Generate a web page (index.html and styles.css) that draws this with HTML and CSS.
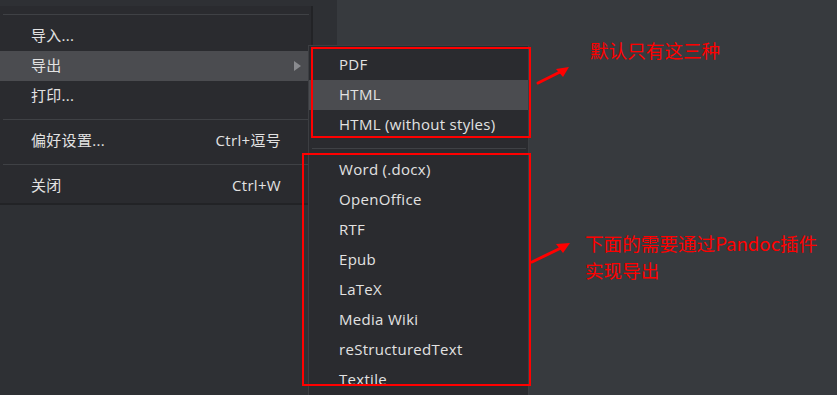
FILE: index.html
```html
<!DOCTYPE html>
<html lang="zh-CN">
<head>
<meta charset="utf-8">
<link rel="stylesheet" href="styles.css">
</head>
<body>
<div class="page">
  <div class="sidebar"></div>

  <div class="menu main-menu">
    <div class="sep"></div>
    <div class="item"><span>导入...</span></div>
    <div class="item active"><span>导出</span><span class="caret"></span></div>
    <div class="item"><span>打印...</span></div>
    <div class="sep"></div>
    <div class="item"><span>偏好设置...</span><span class="key">Ctrl+逗号</span></div>
    <div class="sep"></div>
    <div class="item"><span>关闭</span><span class="key">Ctrl+W</span></div>
  </div>

  <div class="menu sub-menu">
    <div class="item"><span>PDF</span></div>
    <div class="item active"><span>HTML</span></div>
    <div class="item"><span>HTML (without styles)</span></div>
    <div class="sep"></div>
    <div class="item"><span>Word (.docx)</span></div>
    <div class="item"><span>OpenOffice</span></div>
    <div class="item"><span>RTF</span></div>
    <div class="item"><span>Epub</span></div>
    <div class="item"><span>LaTeX</span></div>
    <div class="item"><span>Media Wiki</span></div>
    <div class="item"><span>reStructuredText</span></div>
    <div class="item"><span>Textile</span></div>
  </div>

  <div class="box box-top"></div>
  <div class="box box-bottom"></div>

  <svg class="arrows" width="837" height="395" viewBox="0 0 837 395">
    <line x1="538" y1="83" x2="562" y2="71" stroke="#ff0000" stroke-width="3" stroke-linecap="round"/>
    <polygon points="569,67 556,69 563,77" fill="#ff0000"/>
    <line x1="532" y1="262" x2="563" y2="247" stroke="#ff0000" stroke-width="3" stroke-linecap="round"/>
    <polygon points="570,243 556,244 563,253" fill="#ff0000"/>
  </svg>

  <div class="note note-top">默认只有这三种</div>
  <div class="note note-bottom">下面的需要通过Pandoc插件<br>实现导出</div>
</div>
</body>
</html>
```

FILE: styles.css
```css
html, body {
  margin: 0;
  padding: 0;
}
body {
  background: #373a3e;
  font-family: "Open Sans", "Noto Sans CJK SC", sans-serif;
  overflow: hidden;
}
.page {
  position: relative;
  width: 837px;
  height: 395px;
  overflow: hidden;
  display: flex;
}
.sidebar {
  width: 337px;
  height: 100%;
  background: #2e3034;
  flex: none;
}
.menu {
  position: absolute;
  background: #2a2b2f;
  color: #e2e2e2;
  font-size: 15px;
  letter-spacing: 0.3px;
  box-sizing: border-box;
}
.main-menu {
  left: 0;
  top: 6px;
  width: 313px;
  padding-bottom: 2px;
  border-right: 2px solid #222326;
  border-bottom: 2px solid #222326;
}
.sub-menu {
  left: 308px;
  top: 45px;
  width: 221px;
  height: 380px;
  padding-top: 4px;
  border: 1px solid #3c3e42;
}
.item {
  box-sizing: border-box;
  height: 30px;
  display: flex;
  align-items: center;
  justify-content: space-between;
  padding: 0 30px 2px 31px;
  line-height: 28px;
  white-space: nowrap;
}
.sub-menu .item {
  padding-left: 30px;
}
.item.active {
  background: #4b4c50;
}
.sep {
  height: 15px;
  display: flex;
  align-items: center;
  padding: 0 2px 0 3px;
}
.sep::before {
  content: "";
  display: block;
  flex: 1;
  height: 1px;
  background: #3f4145;
  margin-top: 1px;
}
.key {
  color: #e2e2e2;
}
.caret {
  width: 0;
  height: 0;
  border-top: 5px solid transparent;
  border-bottom: 5px solid transparent;
  border-left: 7px solid #8a8b8f;
  margin-right: -20px;
  margin-top: 2px;
}
.box {
  position: absolute;
  border: 2px solid #ff0000;
  box-sizing: border-box;
}
.box-top {
  left: 311px;
  top: 47px;
  width: 220px;
  height: 91px;
}
.box-bottom {
  left: 302px;
  top: 153px;
  width: 229px;
  height: 233px;
}
.arrows {
  position: absolute;
  left: 0;
  top: 0;
}
.note {
  position: absolute;
  color: #ff0000;
  font-family: "Noto Sans CJK SC", sans-serif;
  font-size: 18.6px;
  line-height: 27px;
  white-space: nowrap;
}
.note-top {
  left: 590px;
  top: 36px;
}
.note-bottom {
  left: 585px;
  top: 229px;
}
```
